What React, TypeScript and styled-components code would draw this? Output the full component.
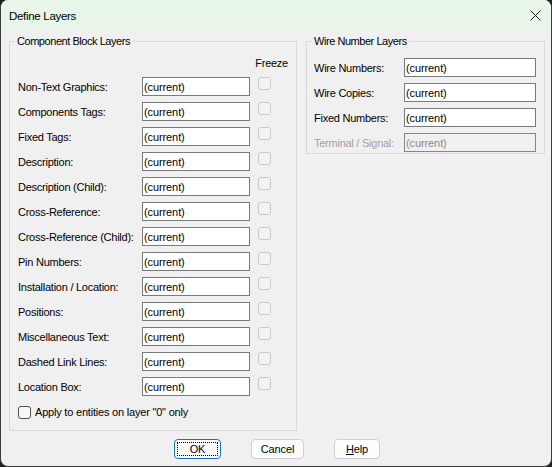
import React from "react";
import styled, { createGlobalStyle } from "styled-components";

const GlobalStyle = createGlobalStyle`
  html, body {
    margin: 0;
    padding: 0;
    background: #1f1f1f;
  }
  body {
    font-family: "Liberation Sans", Arial, sans-serif;
    font-size: 11px;
    color: #000;
  }
  * { box-sizing: border-box; }
`;

const Window = styled.div`
  width: 552px;
  height: 467px;
  display: flex;
  flex-direction: column;
  background: #f0f0f0;
  border: 1px solid #3a3a3a;
  border-top: 0;
  border-radius: 8px;
  overflow: hidden;
`;

const TitleBar = styled.div`
  height: 30px;
  flex: none;
  display: flex;
  align-items: center;
  justify-content: space-between;
  padding: 0 10px 0 8px;
  background: #e8f5e9;
`;

const TitleText = styled.span`
  font-size: 11.5px;
  letter-spacing: -0.3px;
  line-height: 14px;
  margin-top: 2px;
`;

const CloseButton = styled.span`
  display: flex;
  width: 11px;
  height: 11px;
  margin-top: 1px;
`;

const Body = styled.div`
  flex: 1;
  padding: 5px 6px 0 8px;
  display: flex;
  flex-direction: column;
`;

const Columns = styled.div`
  display: flex;
  align-items: flex-start;
  gap: 9px;
`;

const Group = styled.fieldset<{ $w: number; $h: number }>`
  margin: 0;
  padding: 0;
  min-width: 0;
  width: ${(p) => p.$w}px;
  height: ${(p) => p.$h}px;
  border: 1px solid #d9d9d9;
  box-sizing: border-box;
`;

const Legend = styled.legend`
  margin-left: 5px;
  padding: 0 2px;
  line-height: 13px;
  font-size: 11px;
  letter-spacing: -0.45px;
`;

const GroupContent = styled.div<{ $top: number; $left: number; $right: number }>`
  padding: ${(p) => p.$top}px ${(p) => p.$right}px 0 ${(p) => p.$left}px;
  display: flex;
  flex-direction: column;
`;

const FreezeHeader = styled.div`
  height: 20px;
  display: flex;
  justify-content: flex-end;
  padding-right: 8px;
  line-height: 13px;
  letter-spacing: -0.25px;
`;

const Row = styled.div`
  height: 25px;
  display: flex;
  align-items: flex-start;
`;

const Label = styled.span<{ $w: number; $disabled?: boolean }>`
  width: ${(p) => p.$w}px;
  flex: none;
  padding-top: 4px;
  line-height: 13px;
  letter-spacing: -0.25px;
  white-space: nowrap;
  color: ${(p) => (p.$disabled ? "#a2a2a2" : "#000")};
`;

const TextBox = styled.input<{ $w: number }>`
  width: ${(p) => p.$w}px;
  height: 19px;
  flex: none;
  margin: 0;
  padding: 0 0 0 1px;
  border: 1px solid #7a7a7a;
  border-radius: 0;
  background: #fff;
  font-family: "Liberation Sans", Arial, sans-serif;
  font-size: 11px;
  letter-spacing: -0.1px;
  color: #000;
  outline: none;

  &:disabled {
    background: #f0f0f0;
    border-color: #858585;
    color: #8a8a8a;
  }
`;

const FreezeBox = styled.input`
  appearance: none;
  width: 13px;
  height: 13px;
  margin: 0 0 0 8px;
  flex: none;
  border: 1px solid #c9c9c9;
  border-radius: 3px;
  background: #f3f3f3;
`;

const ApplyRow = styled.label`
  margin-top: 4px;
  display: flex;
  align-items: center;
  gap: 4px;
  line-height: 13px;
  letter-spacing: -0.2px;
`;

const ApplyBox = styled.input`
  appearance: none;
  width: 13px;
  height: 13px;
  margin: 0;
  flex: none;
  border: 1px solid #505050;
  border-radius: 3px;
  background: #f6f6f6;
`;

const ButtonRow = styled.div`
  margin-top: 8px;
  display: flex;
  justify-content: center;
  gap: 30px;
`;

const Button = styled.button<{ $w: number; $default?: boolean }>`
  width: ${(p) => p.$w}px;
  height: 20px;
  margin: 0;
  padding: 2px;
  display: flex;
  background: #fdfdfd;
  border: 1px solid ${(p) => (p.$default ? "#1a6fc4" : "#d0d0d0")};
  border-radius: 4px;
  font-family: "Liberation Sans", Arial, sans-serif;
  font-size: 11px;
  letter-spacing: -0.1px;
  color: #000;
`;

const ButtonFace = styled.span<{ $focus?: boolean }>`
  flex: 1;
  display: flex;
  align-items: center;
  justify-content: center;
  border: 1px dotted ${(p) => (p.$focus ? "#000" : "transparent")};
  line-height: 13px;
`;

const Mnemonic = styled.span`
  text-decoration: underline;
  text-underline-offset: 1px;
`;

const blockLayers = [
  "Non-Text Graphics:",
  "Components Tags:",
  "Fixed Tags:",
  "Description:",
  "Description (Child):",
  "Cross-Reference:",
  "Cross-Reference (Child):",
  "Pin Numbers:",
  "Installation / Location:",
  "Positions:",
  "Miscellaneous Text:",
  "Dashed Link Lines:",
  "Location Box:",
];

const wireLayers = [
  { label: "Wire Numbers:", disabled: false },
  { label: "Wire Copies:", disabled: false },
  { label: "Fixed Numbers:", disabled: false },
  { label: "Terminal / Signal:", disabled: true },
];

export default function App() {
  return (
    <>
      <GlobalStyle />
      <Window>
        <TitleBar>
          <TitleText>Define Layers</TitleText>
          <CloseButton>
            <svg width="11" height="11" viewBox="0 0 11 11">
              <path d="M0.5 0.5 L10.5 10.5 M10.5 0.5 L0.5 10.5" stroke="#1a1a1a" strokeWidth="1" fill="none" />
            </svg>
          </CloseButton>
        </TitleBar>
        <Body>
          <Columns>
            <Group $w={288} $h={396}>
              <Legend>Component Block Layers</Legend>
              <GroupContent $top={9} $left={8} $right={0}>
                <FreezeHeader>Freeze</FreezeHeader>
                {blockLayers.map((l) => (
                  <Row key={l}>
                    <Label $w={124}>{l}</Label>
                    <TextBox $w={108} defaultValue="(current)" />
                    <FreezeBox type="checkbox" disabled />
                  </Row>
                ))}
                <ApplyRow>
                  <ApplyBox type="checkbox" />
                  <span>Apply to entities on layer "0" only</span>
                </ApplyRow>
              </GroupContent>
            </Group>
            <Group $w={239} $h={119}>
              <Legend>Wire Number Layers</Legend>
              <GroupContent $top={10} $left={7} $right={8}>
                {wireLayers.map((w) => (
                  <Row key={w.label}>
                    <Label $w={90} $disabled={w.disabled}>{w.label}</Label>
                    <TextBox $w={132} defaultValue="(current)" disabled={w.disabled} />
                  </Row>
                ))}
              </GroupContent>
            </Group>
          </Columns>
          <ButtonRow>
            <Button $w={47} $default>
              <ButtonFace $focus>OK</ButtonFace>
            </Button>
            <Button $w={53}>
              <ButtonFace>Cancel</ButtonFace>
            </Button>
            <Button $w={46}>
              <ButtonFace>
                <Mnemonic>H</Mnemonic>elp
              </ButtonFace>
            </Button>
          </ButtonRow>
        </Body>
      </Window>
    </>
  );
}
